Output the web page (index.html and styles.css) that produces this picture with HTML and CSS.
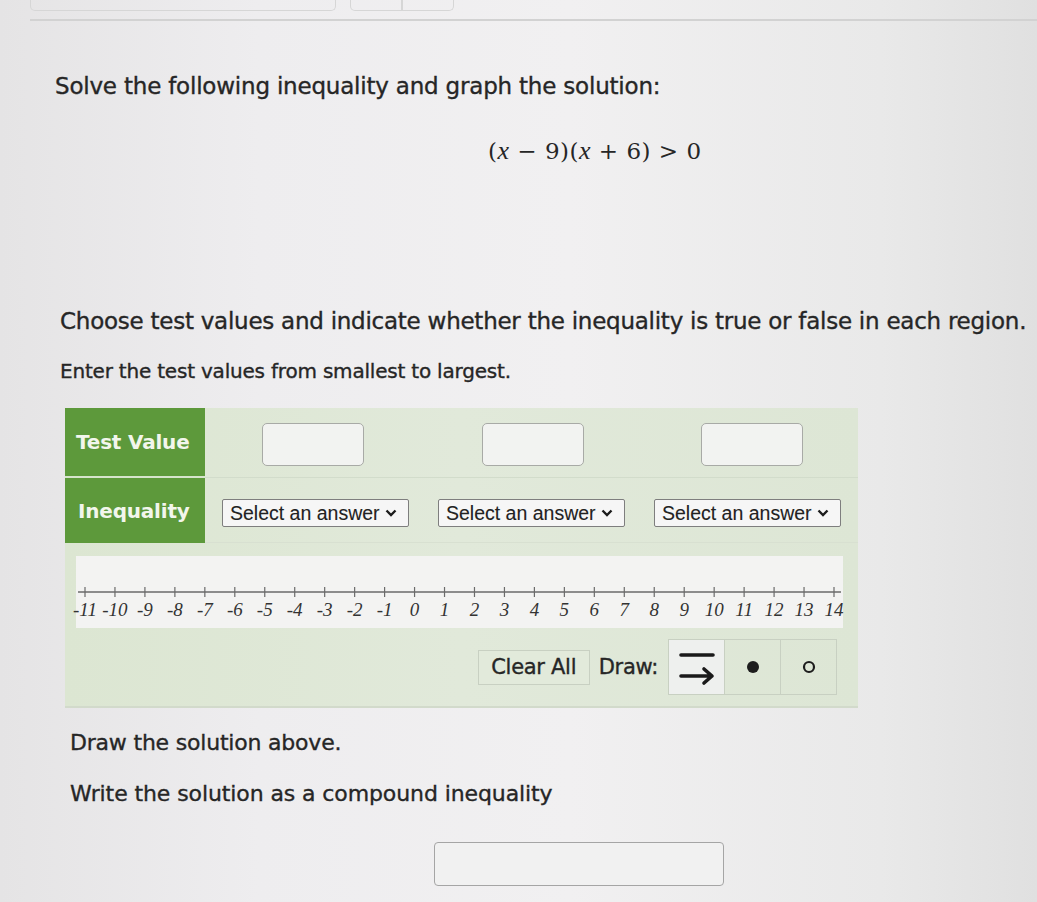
FILE: index.html
```html
<!DOCTYPE html>
<html>
<head>
<meta charset="utf-8">
<link rel="stylesheet" href="styles.css">
</head>
<body>
<div class="page">
  <div class="topbar">
    <div class="tbox tb1"></div>
    <div class="tbox tb2"></div>
    <div class="tbox tb3"></div>
  </div>
  <div class="rule"></div>

  <p class="title">Solve the following inequality and graph the solution:</p>
  <p class="eq">(<i>x</i> &minus; 9)(<i>x</i> + 6) &gt; 0</p>

  <p class="choose">Choose test values and indicate whether the inequality is true or false in each region.</p>
  <p class="enter">Enter the test values from smallest to largest.</p>

  <div class="panel">
    <div class="grid">
      <div class="hcell">Test Value</div>
      <div class="cell"><div class="tinput"></div></div>
      <div class="cell"><div class="tinput"></div></div>
      <div class="cell"><div class="tinput"></div></div>
      <div class="hcell hcell2">Inequality</div>
      <div class="cell cell2"><div class="sel">Select an answer<svg class="chev" viewBox="0 0 12 8"><path d="M1.5 1.5 L6 6 L10.5 1.5" /></svg></div></div>
      <div class="cell cell2"><div class="sel">Select an answer<svg class="chev" viewBox="0 0 12 8"><path d="M1.5 1.5 L6 6 L10.5 1.5" /></svg></div></div>
      <div class="cell cell2"><div class="sel">Select an answer<svg class="chev" viewBox="0 0 12 8"><path d="M1.5 1.5 L6 6 L10.5 1.5" /></svg></div></div>
    </div>
    <div class="graphwrap">
      <div class="numline">
        <svg width="767" height="72" viewBox="0 0 767 72" id="nl">
          <line x1="2" y1="36" x2="765" y2="36" class="axis"/>
        </svg>
      </div>
      <div class="tools">
        <div class="clear">Clear All</div>
        <div class="drawlbl">Draw:</div>
        <div class="toolset">
          <div class="tool sel-tool">
            <svg width="40" height="40" viewBox="0 0 40 40"><path d="M4 8 H36" class="ic"/><path d="M4 29 H34 M27 22 L35 29 L27 36" class="ic"/></svg>
          </div>
          <div class="tool">
            <svg width="20" height="20" viewBox="0 0 20 20"><circle cx="10" cy="10" r="6" fill="#1d1d1d"/></svg>
          </div>
          <div class="tool">
            <svg width="20" height="20" viewBox="0 0 20 20"><circle cx="10" cy="10" r="5" fill="none" stroke="#1d1d1d" stroke-width="2.2"/></svg>
          </div>
        </div>
      </div>
    </div>
  </div>

  <p class="draw">Draw the solution above.</p>
  <p class="write">Write the solution as a compound inequality</p>
  <div class="ansrow"><div class="answer"></div></div>
</div>
<script>
  (function(){
    var svg = document.getElementById('nl');
    var ns = 'http://www.w3.org/2000/svg';
    for (var i = -11; i <= 14; i++) {
      var x = 9 + (i + 11) * 29.96;
      var t = document.createElementNS(ns, 'line');
      t.setAttribute('x1', x); t.setAttribute('x2', x);
      t.setAttribute('y1', 31); t.setAttribute('y2', 41);
      t.setAttribute('class', 'tick');
      svg.appendChild(t);
      var tx = document.createElementNS(ns, 'text');
      tx.setAttribute('x', x); tx.setAttribute('y', 60);
      tx.setAttribute('class', 'lbl');
      tx.textContent = String(i);
      svg.appendChild(tx);
    }
  })();
</script>
</body>
</html>
```
FILE: styles.css
```css
html, body {
  margin: 0;
  padding: 0;
}
body {
  width: 1037px;
  height: 902px;
  overflow: hidden;
  background: linear-gradient(90deg, #e5e4e5 0%, #eeedef 25%, #f1f0f1 55%, #e9e9e9 85%, #e0e0e0 100%);
  font-family: "DejaVu Sans", Verdana, sans-serif;
  color: #262626;
  -webkit-text-stroke: 0.35px #262626;
}
.page {
  height: 902px;
}
.topbar {
  display: flex;
  height: 12px;
  padding-left: 30px;
  gap: 14px;
}
.tbox {
  border: 1px solid #d6d6d6;
  border-top: none;
  border-radius: 0 0 5px 5px;
  height: 11px;
  box-sizing: border-box;
}
.tb1 { width: 306px; }
.tb2 { width: 52px; border-radius: 0 0 0 5px; }
.tb3 { width: 52px; margin-left: -14px; border-radius: 0 0 5px 0; }
.rule {
  margin: 7px 0 0 30px;
  height: 2px;
  background: #d2d2d2;
}
p { margin: 0; }
.title {
  margin: 52px 0 0 55px;
  font-size: 23px;
  line-height: 26px;
  letter-spacing: -0.2px;
}
.eq {
  margin: 38px 0 0 488px;
  font-family: "DejaVu Serif", "Liberation Serif", serif;
  font-size: 23px;
  line-height: 28px;
  -webkit-text-stroke: 0;
  letter-spacing: 0.5px;
}
.eq i { font-family: "Liberation Serif", serif; font-size: 26px; }
.choose {
  margin: 142px 0 0 60px;
  font-size: 23px;
  line-height: 28px;
  letter-spacing: -0.25px;
  white-space: nowrap;
}
.enter {
  margin: 24px 0 0 60px;
  font-size: 20px;
  line-height: 24px;
  letter-spacing: -0.2px;
}
.panel {
  margin: 25px 0 0 65px;
  width: 793px;
  background: linear-gradient(90deg, #dce6d2, #e1e9da 50%, #dde6d5);
  border-bottom: 2px solid #d2dacb;
}
.grid {
  display: grid;
  grid-template-columns: 140px 216px 216px 221px;
  grid-template-rows: 70px 65px;
}
.hcell {
  background: #5d993b;
  color: #f2f6ec;
  -webkit-text-stroke: 0;
  font-weight: bold;
  font-size: 20px;
  letter-spacing: -0.2px;
  display: flex;
  align-items: center;
  padding-left: 11px;
  border-bottom: 2px solid #d6e4cc;
}
.hcell2 { padding-left: 13px; border-bottom: none; }
.cell {
  display: flex;
  align-items: center;
  justify-content: center;
  border-bottom: 1px solid #d2dccb;
  padding-top: 4px;
}
.cell2 { border-bottom: 1px solid #d8e0d1; justify-content: flex-start; padding-left: 17px; padding-top: 6px; }
.grid .cell:nth-child(3), .grid .cell:nth-child(4) { padding-left: 8px; }
.tinput {
  width: 102px;
  height: 43px;
  box-sizing: border-box;
  background: #f2f3f1;
  border: 1px solid #a8aaa6;
  border-radius: 5px;
}
.sel {
  width: 187px;
  height: 28px;
  box-sizing: border-box;
  background: #f6f6f6;
  border: 1px solid #7e7e7e;
  border-radius: 2px;
  font-family: "Liberation Sans", Arial, sans-serif;
  font-size: 19.5px;
  -webkit-text-stroke: 0.1px #222;
  color: #222;
  display: flex;
  align-items: center;
  padding-left: 7px;
  white-space: nowrap;
}
.chev {
  width: 12px;
  height: 8px;
  margin-left: 5px;
  flex: none;
}
.chev path { fill: none; stroke: #1c1c1c; stroke-width: 2.4; }
.graphwrap {
  padding: 13px 15px 0 11px;
}
.numline {
  background: #f3f3f2;
  height: 72px;
}
#nl { overflow: visible; display: block; }
#nl .axis { stroke: #6a6a6a; stroke-width: 1.5; }
#nl .tick { stroke: #6a6a6a; stroke-width: 1.2; }
#nl .lbl {
  font-family: "Liberation Serif", serif;
  font-style: italic;
  font-size: 19px;
  fill: #333;
  stroke: none;
  -webkit-text-stroke: 0;
  text-anchor: middle;
}
.tools {
  display: flex;
  justify-content: flex-end;
  align-items: center;
  height: 78px;
}
.clear {
  width: 112px;
  height: 35px;
  box-sizing: border-box;
  border: 1px solid #c8d0c2;
  background: #e2eadb;
  display: flex;
  align-items: center;
  justify-content: center;
  font-size: 21px;
  letter-spacing: -0.3px;
}
.drawlbl {
  margin: 0 10px 0 9px;
  font-size: 21px;
  letter-spacing: -0.3px;
}
.toolset {
  display: flex;
  border: 1px solid #c8d0c2;
  margin-right: 6px;
}
.tool {
  width: 55px;
  height: 54px;
  display: flex;
  align-items: center;
  justify-content: center;
  border-left: 1px solid #c8d0c2;
}
.tool:first-child { border-left: none; }
.sel-tool { background: #eef0ee; }
.ic { fill: none; stroke: #1a1a1a; stroke-width: 3.6; stroke-linecap: round; stroke-linejoin: round; -webkit-text-stroke: 0; }
.draw {
  margin: 22px 0 0 70px;
  font-size: 22px;
  line-height: 26px;
  letter-spacing: -0.2px;
}
.write {
  margin: 25px 0 0 70px;
  font-size: 22px;
  line-height: 26px;
  letter-spacing: -0.1px;
}
.ansrow {
  padding: 35px 0 0 434px;
}
.answer {
  width: 290px;
  height: 44px;
  box-sizing: border-box;
  border: 1px solid #a5a5a5;
  border-radius: 4px;
  background: #f1f1f1;
}
```
